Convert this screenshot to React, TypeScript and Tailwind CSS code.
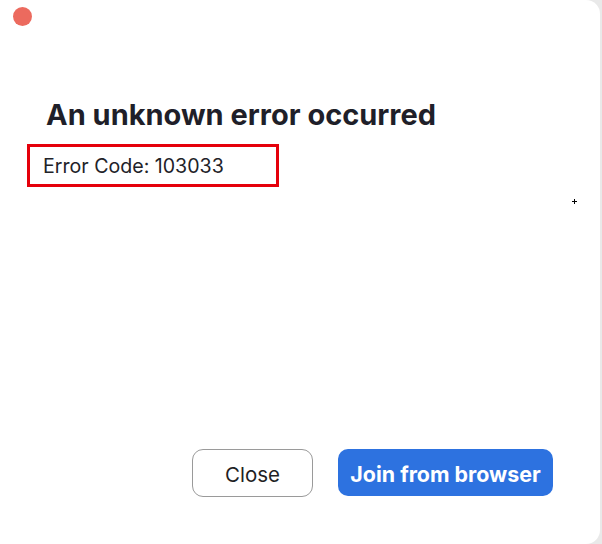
export default function App() {
  return (
    <div className="w-[602px] h-[544px] bg-[#e9e9e9] overflow-hidden">
      <div className="relative w-[600px] h-[544px] bg-white rounded-r-[14px] flex flex-col font-['Inter','Liberation_Sans',Arial,sans-serif]">
        <div className="pt-[7px] pl-[13px]">
          <div className="w-[19px] h-[19px] rounded-full bg-[#ec6a5e]" />
        </div>
        <h1 className="mt-[71px] ml-[46px] text-[29px] leading-[36px] font-bold text-[#1f1f29]">
          An unknown error occurred
        </h1>
        <div className="mt-[11px] ml-[27px] w-[252px] h-[43px] border-[3px] border-[#e5000b] flex items-center pl-[13px] pt-[2px]">
          <span className="text-[19.6px] text-[#222228]">Error Code: 103033</span>
        </div>
        <div className="absolute left-[572px] top-[199px] w-[5px] h-[5px]">
          <div className="absolute left-[2px] top-0 w-[1px] h-[5px] bg-black" />
          <div className="absolute left-0 top-[2px] w-[5px] h-[1px] bg-black" />
        </div>
        <div className="mt-auto mb-[47px] flex gap-[25px] pl-[192px]">
          <button className="w-[121px] h-[48px] pt-[4px] rounded-[11px] border border-[#9a9a9a] bg-white text-[20.5px] text-[#1f1f24]">
            Close
          </button>
          <button className="w-[215px] h-[47px] pt-[3px] rounded-[10px] bg-[#2d72e0] text-[21.4px] font-bold text-white">
            Join from browser
          </button>
        </div>
      </div>
    </div>
  );
}
